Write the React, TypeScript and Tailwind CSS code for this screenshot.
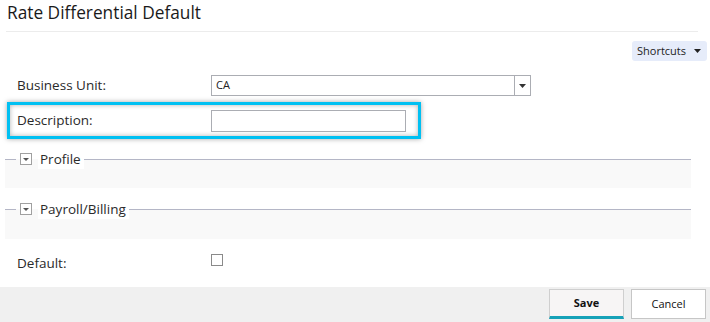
export default function App() {
  return (
    <div className="w-[710px] h-[322px] bg-white flex flex-col overflow-hidden font-['Open_Sans',sans-serif] text-[#2a2a2a]">
      <div className="h-[31px] pl-[7px] text-[17.3px] leading-[26px] text-[#1a1a1a]">Rate Differential Default</div>
      <div className="ml-[6px] w-[692px] h-px bg-[#ececec]" />

      <div className="mt-[9px] flex justify-end pr-[3px]">
        <button className="w-[75px] h-[20px] rounded-[3px] bg-[#e6ecfa] text-[11px] leading-[20px] flex items-center pl-[5px] text-[#222]">
          <span>Shortcuts</span>
          <svg width="7" height="4" viewBox="0 0 7 4" className="ml-auto mr-[6px]">
            <path d="M0 0 L7 0 L3.5 4 Z" fill="#222" />
          </svg>
        </button>
      </div>

      <div className="mt-[14px] flex items-center h-[21px]">
        <div className="w-[211px] pl-[17px] text-[13.5px]">Business Unit:</div>
        <div className="w-[320px] h-[21px] border border-[#abadb3] flex items-center">
          <div className="flex-1 pl-[4px] text-[11px] text-[#222]">CA</div>
          <div className="w-[16px] h-full border-l border-[#abadb3] flex items-center justify-center">
            <svg width="7" height="4" viewBox="0 0 7 4">
              <path d="M0 0 L7 0 L3.5 4 Z" fill="#333" />
            </svg>
          </div>
        </div>
      </div>

      <div className="mt-[6px] ml-[7px] w-[414px] h-[37px] border-[3px] border-[#00c0f2] shadow-[0_0_5px_rgba(0,0,0,0.35),inset_0_0_5px_rgba(0,0,0,0.3)] flex items-center">
        <div className="w-[201px] pl-[7px] text-[13.5px]">Description:</div>
        <div className="w-[195px] h-[22px] border border-[#abadb3] bg-white" />
      </div>

      <fieldset className="mt-[11px] ml-[5px] w-[686px] border-t border-[#b4b6c6] bg-[#f9f9f9]">
        <legend className="ml-[11px] h-[18px] flex items-center pl-[4px]">
          <span className="w-[12px] h-[12px] border border-[#a0a0a0] bg-white flex items-center justify-center">
            <svg width="6" height="3" viewBox="0 0 6 3">
              <path d="M0 0 L6 0 L3 3 Z" fill="#555" />
            </svg>
          </span>
          <span className="ml-[6px] pl-[2px] pr-[3px] bg-white text-[13.5px] leading-[19px] h-[19px]">Profile</span>
        </legend>
        <div className="h-[20px]" />
      </fieldset>

      <fieldset className="mt-[12px] ml-[5px] w-[686px] border-t border-[#b4b6c6] bg-[#f9f9f9]">
        <legend className="ml-[11px] h-[18px] flex items-center pl-[4px]">
          <span className="w-[12px] h-[12px] border border-[#a0a0a0] bg-white flex items-center justify-center">
            <svg width="6" height="3" viewBox="0 0 6 3">
              <path d="M0 0 L6 0 L3 3 Z" fill="#555" />
            </svg>
          </span>
          <span className="ml-[6px] pl-[2px] pr-[3px] bg-white text-[13.5px] leading-[19px] h-[19px]">Payroll/Billing</span>
        </legend>
        <div className="h-[21px]" />
      </fieldset>

      <div className="mt-[12px] flex h-[24px]">
        <div className="w-[211px] pl-[17px] text-[13.5px] leading-[24px]">Default:</div>
        <div className="mt-[3px] w-[12px] h-[12px] border border-[#8a8a8a] bg-white" />
      </div>

      <div className="mt-auto h-[35px] bg-[#f0f0f0] flex justify-end items-start pt-[2px] pr-[4px] gap-[7px]">
        <button className="w-[75px] h-[30px] border border-[#cfcfcf] border-b-[3px] border-b-[#17a2b8] bg-[#f7f5f5] text-[11px] font-bold text-[#111]">Save</button>
        <button className="w-[75px] h-[30px] border border-[#c6c6c6] bg-white text-[11px] text-[#111]">Cancel</button>
      </div>
    </div>
  );
}
